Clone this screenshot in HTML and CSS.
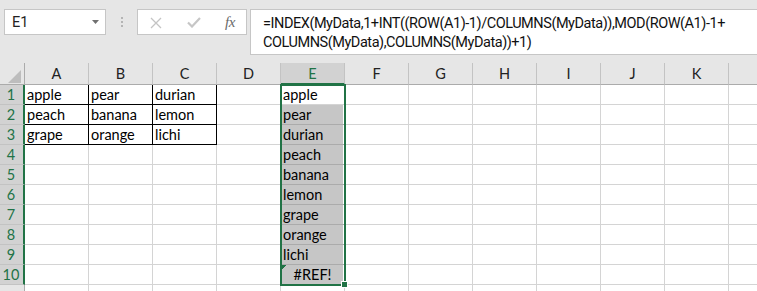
FILE: index.html
```html
<!DOCTYPE html>
<html>
<head>
<meta charset="utf-8">
<link rel="stylesheet" href="styles.css">
</head>
<body>
<div class="app">
  <div class="toolbar">
    <div class="namebox">
      <span class="name">E1</span>
      <svg class="dd" width="8" height="4" viewBox="0 0 8 4"><polygon points="0,0 7,0 3.5,4" fill="#707070"/></svg>
    </div>
    <div class="grip"><i></i><i></i><i></i></div>
    <div class="btns">
      <svg class="ico" width="12" height="12" viewBox="0 0 12 12"><path d="M1 1 L11 11 M11 1 L1 11" stroke="#c4c4c4" stroke-width="1.3" fill="none"/></svg>
      <svg class="ico" width="14" height="11" viewBox="0 0 14 11"><path d="M1 5.5 L5 9.5 L13 1" stroke="#c6c6c6" stroke-width="2.2" fill="none"/></svg>
      <span class="fx">fx</span>
    </div>
    <div class="formula">
      <div class="fline">=INDEX(MyData,1+INT((ROW(A1)-1)/COLUMNS(MyData)),MOD(ROW(A1)-1+</div>
      <div class="fline">COLUMNS(MyData),COLUMNS(MyData))+1)</div>
    </div>
  </div>
  <div class="sheet">
    <div class="grid">
      <div class="corner"><svg width="25" height="22" viewBox="0 0 25 22"><polygon points="21,7 21,20 8,20" fill="#bdbdbd"/></svg></div>
      <div class="ch">A</div><div class="ch">B</div><div class="ch">C</div><div class="ch">D</div><div class="ch sel">E</div><div class="ch">F</div><div class="ch">G</div><div class="ch">H</div><div class="ch">I</div><div class="ch">J</div><div class="ch">K</div><div class="ch"></div>

      <div class="rh sel">1</div><div class="c b">apple</div><div class="c b">pear</div><div class="c b">durian</div><div class="c"></div><div class="c act">apple</div><div class="c"></div><div class="c"></div><div class="c"></div><div class="c"></div><div class="c"></div><div class="c"></div><div class="c"></div>
      <div class="rh sel">2</div><div class="c b">peach</div><div class="c b">banana</div><div class="c b">lemon</div><div class="c"></div><div class="c hl">pear</div><div class="c"></div><div class="c"></div><div class="c"></div><div class="c"></div><div class="c"></div><div class="c"></div><div class="c"></div>
      <div class="rh sel">3</div><div class="c b">grape</div><div class="c b">orange</div><div class="c b">lichi</div><div class="c"></div><div class="c hl">durian</div><div class="c"></div><div class="c"></div><div class="c"></div><div class="c"></div><div class="c"></div><div class="c"></div><div class="c"></div>
      <div class="rh sel">4</div><div class="c"></div><div class="c"></div><div class="c"></div><div class="c"></div><div class="c hl">peach</div><div class="c"></div><div class="c"></div><div class="c"></div><div class="c"></div><div class="c"></div><div class="c"></div><div class="c"></div>
      <div class="rh sel">5</div><div class="c"></div><div class="c"></div><div class="c"></div><div class="c"></div><div class="c hl">banana</div><div class="c"></div><div class="c"></div><div class="c"></div><div class="c"></div><div class="c"></div><div class="c"></div><div class="c"></div>
      <div class="rh sel">6</div><div class="c"></div><div class="c"></div><div class="c"></div><div class="c"></div><div class="c hl">lemon</div><div class="c"></div><div class="c"></div><div class="c"></div><div class="c"></div><div class="c"></div><div class="c"></div><div class="c"></div>
      <div class="rh sel">7</div><div class="c"></div><div class="c"></div><div class="c"></div><div class="c"></div><div class="c hl">grape</div><div class="c"></div><div class="c"></div><div class="c"></div><div class="c"></div><div class="c"></div><div class="c"></div><div class="c"></div>
      <div class="rh sel">8</div><div class="c"></div><div class="c"></div><div class="c"></div><div class="c"></div><div class="c hl">orange</div><div class="c"></div><div class="c"></div><div class="c"></div><div class="c"></div><div class="c"></div><div class="c"></div><div class="c"></div>
      <div class="rh sel">9</div><div class="c"></div><div class="c"></div><div class="c"></div><div class="c"></div><div class="c hl">lichi</div><div class="c"></div><div class="c"></div><div class="c"></div><div class="c"></div><div class="c"></div><div class="c"></div><div class="c"></div>
      <div class="rh sel">10</div><div class="c"></div><div class="c"></div><div class="c"></div><div class="c"></div><div class="c hl err">#REF!</div><div class="c"></div><div class="c"></div><div class="c"></div><div class="c"></div><div class="c"></div><div class="c"></div><div class="c"></div>
      <div class="rh"></div><div class="c"></div><div class="c"></div><div class="c"></div><div class="c"></div><div class="c"></div><div class="c"></div><div class="c"></div><div class="c"></div><div class="c"></div><div class="c"></div><div class="c"></div><div class="c"></div>
    </div>
    <div class="selbox"></div>
    <div class="handle"></div>
  </div>
</div>
</body>
</html>
```
FILE: styles.css
```css
html, body {
  margin: 0;
  padding: 0;
  background: #e6e6e6;
  overflow: hidden;
}
.app {
  width: 757px;
  height: 291px;
  overflow: hidden;
  background: #e6e6e6;
}
.toolbar {
  height: 63px;
  box-sizing: border-box;
  padding: 9px 0 0 4px;
  display: flex;
  align-items: flex-start;
  font-family: Roboto, "Liberation Sans", sans-serif;
}
.namebox {
  width: 102px;
  height: 26px;
  box-sizing: border-box;
  border: 1px solid #c6c6c6;
  background: #fff;
  display: flex;
  align-items: center;
  padding: 0 5px 0 7px;
  justify-content: space-between;
}
.name {
  font-size: 14.5px;
  color: #222;
}
.dd { display: block; }
.grip {
  width: 31px;
  height: 26px;
  display: flex;
  flex-direction: column;
  align-items: center;
  justify-content: center;
  gap: 2px;
}
.grip i {
  display: block;
  width: 2px;
  height: 2px;
  background: #b4b4b4;
}
.btns {
  width: 110px;
  height: 26px;
  box-sizing: border-box;
  border: 1px solid #c6c6c6;
  background: #fff;
  display: flex;
  align-items: center;
  padding: 1px 0 0 12px;
}
.ico { display: block; }
.btns .ico:first-child { margin-right: 25px; }
.btns .ico + .ico { margin-right: 24px; }
.fx {
  font-family: "Liberation Serif", serif;
  font-style: italic;
  font-size: 15px;
  color: #6a6a6a;
  letter-spacing: -0.5px;
}
.formula {
  margin-left: 3px;
  flex: 1;
  height: 46px;
  box-sizing: border-box;
  border: 1px solid #c6c6c6;
  border-right: none;
  background: #fff;
  padding: 4px 0 0 12px;
  font-size: 14.5px;
  letter-spacing: -0.45px;
  line-height: 19px;
  color: #111;
  white-space: nowrap;
}
.sheet {
  position: relative;
}
.grid {
  display: grid;
  grid-template-columns: 25px repeat(12, 64px);
  grid-template-rows: 22px repeat(11, 20px);
  font-family: Lato, "Liberation Sans", sans-serif;
  font-size: 14.5px;
  color: #000;
}
.grid > div {
  box-sizing: border-box;
  border-right: 1px solid #d4d4d4;
  border-bottom: 1px solid #d4d4d4;
  overflow: hidden;
  white-space: nowrap;
}
.grid > .corner {
  background: #e6e6e6;
  border-right: 1px solid #ababab;
  border-bottom: 1px solid #ababab;
}
.corner svg { display: block; }
.grid > .ch {
  background: #e6e6e6;
  border-right: 1px solid #c3c3c3;
  border-bottom: 1px solid #ababab;
  text-align: center;
  line-height: 22px;
  color: #222;
}
.grid > .ch.sel {
  background: #d2d2d2;
  color: #217346;
  border-bottom: 2px solid #217346;
}
.grid > .rh {
  background: #e6e6e6;
  border-right: 1px solid #ababab;
  border-bottom: 1px solid #c3c3c3;
  text-align: center;
  line-height: 20px;
  color: #444;
  padding-right: 1px;
}
.grid > .rh.sel {
  background: #d2d2d2;
  color: #217346;
  border-right: 2px solid #217346;
}
.grid > .c {
  background: #fff;
  line-height: 20px;
  padding-left: 2px;
}
.grid > .c.b {
  border-right: 1px solid #000;
  border-bottom: 1px solid #000;
}
.grid > .c.hl {
  background: #c6c6c6;
  border-bottom: 1px solid #ababab;
  box-shadow: inset -1px 0 #ffffff;
}
.grid > .c.err {
  text-align: center;
  padding-left: 0;
  background: linear-gradient(135deg, #217346 3.8px, transparent 3.8px) #c6c6c6;
}
.selbox {
  position: absolute;
  left: 280px;
  top: 21px;
  width: 66px;
  height: 202px;
  box-sizing: border-box;
  border: 2px solid #217346;
  pointer-events: none;
}
.handle {
  position: absolute;
  left: 341px;
  top: 218px;
  width: 7px;
  height: 7px;
  box-sizing: border-box;
  border: 1px solid #fff;
  background: #217346;
}
```
